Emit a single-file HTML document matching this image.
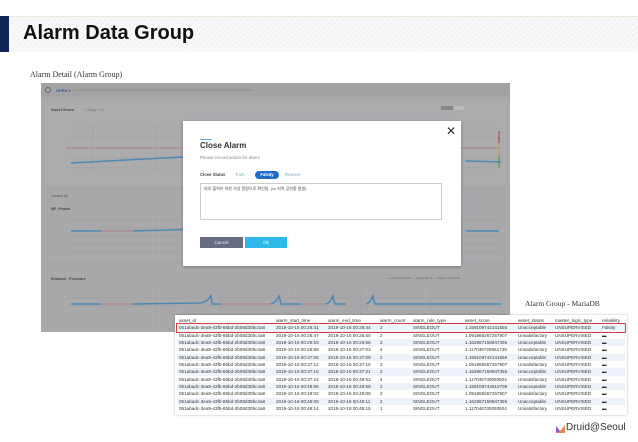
<!DOCTYPE html>
<html><head><meta charset="utf-8"><style>
*{margin:0;padding:0;box-sizing:border-box}
body{width:638px;height:442px;background:#fff;position:relative;overflow:hidden;font-family:"Liberation Sans","Noto Sans CJK KR",sans-serif}
.abs{position:absolute}
.title{left:0;top:16px;width:638px;height:36px;background:repeating-linear-gradient(135deg,#f4f4f4 0 2px,#fafafa 2px 4px);border-top:1px solid #f0e6dc}
.bar{left:0;top:16px;width:9px;height:36px;background:#10265a}
.t{left:23px;top:22px;font-size:20px;font-weight:bold;color:#111}
.cap{font-family:"Liberation Serif",serif;font-size:8px;color:#333}
.panel{left:41px;top:83px;width:469px;height:249px;background:#a9a9ac}
.modal{left:183px;top:121px;width:278px;height:145px;background:#fff;box-shadow:0 1px 3px rgba(0,0,0,.3)}
table{border-collapse:collapse;font-size:4.6px;color:#333;font-family:"Liberation Sans",sans-serif}
td{height:7.33px;padding:0 0 0 2px;white-space:nowrap;overflow:hidden}
tr:nth-child(even) td{background:#eef3fa}
</style></head><body>
<div class="abs title"></div><div class="abs bar"></div>
<div class="abs t">Alarm Data Group</div>
<div class="abs cap" style="left:30px;top:70px">Alarm Detail (Alarm Group)</div>

<div class="abs panel">
<svg width="469" height="249" style="position:absolute;left:0;top:0">
<rect x="0" y="0" width="469" height="14" fill="#a3a3a6"/>
<circle cx="7" cy="7" r="2.5" fill="none" stroke="#666" stroke-width="1"/>
<text x="15" y="9" font-size="4" fill="#3a5a9a" font-weight="bold">OPEN ▾</text>
<rect x="32" y="6" width="180" height="2" fill="#999"/>
<rect x="5" y="18" width="460" height="85" fill="#acacaf"/>
<text x="10" y="28" font-size="4" font-weight="bold" fill="#444">Asset Score</text>
<text x="43" y="28" font-size="3.5" fill="#777">✓ Single Out</text>
<rect x="400" y="23" width="12" height="4" fill="#888"/><rect x="413" y="23" width="10" height="4" fill="#bbb"/>
<g stroke="#999" stroke-width=".4">
<line x1="25" y1="45" x2="460" y2="45"/><line x1="25" y1="55" x2="460" y2="55"/><line x1="25" y1="65" x2="460" y2="65"/><line x1="25" y1="75" x2="460" y2="75"/><line x1="25" y1="85" x2="460" y2="85"/>
<line x1="52" y1="42" x2="52" y2="88"/><line x1="115" y1="42" x2="115" y2="88"/><line x1="180" y1="42" x2="180" y2="88"/>
</g>
<line x1="25" y1="65" x2="460" y2="65" stroke="#b06060" stroke-width=".5"/>
<path d="M30 80 L160 73 Q168 70 170 62 L171 78 L180 78" fill="none" stroke="#4a8ab6" stroke-width="1.5"/>
<path d="M425 78 L460 79" fill="none" stroke="#4a8ab6" stroke-width="1.5"/>
<line x1="458" y1="48" x2="458" y2="60" stroke="#c03030" stroke-width="1"/><line x1="458" y1="60" x2="458" y2="72" stroke="#c0a030" stroke-width="1"/><line x1="458" y1="72" x2="458" y2="85" stroke="#40a040" stroke-width="1"/>
<line x1="5" y1="106" x2="465" y2="106" stroke="#9a9a9d" stroke-width=".6"/>
<text x="10" y="114" font-size="3.5" fill="#555">Caused by</text>
<text x="10" y="127" font-size="4" font-weight="bold" fill="#444">BF_Power</text>
<g stroke="#999" stroke-width=".4">
<line x1="25" y1="137" x2="460" y2="137"/><line x1="25" y1="145" x2="460" y2="145"/><line x1="25" y1="153" x2="460" y2="153"/><line x1="25" y1="161" x2="460" y2="161"/><line x1="25" y1="169" x2="460" y2="169"/>
<line x1="52" y1="135" x2="52" y2="172"/><line x1="115" y1="135" x2="115" y2="172"/><line x1="180" y1="135" x2="180" y2="172"/><line x1="420" y1="135" x2="420" y2="172"/>
</g>
<path d="M30 148 L60 148 M92 148 L160 146 Q168 144 170 139 L171 148 L180 148 M425 148 L458 148" fill="none" stroke="#4a8ab6" stroke-width="1.5"/>
<path d="M60 148 L92 148" stroke="#b07080" stroke-width=".8"/>
<line x1="5" y1="180" x2="465" y2="180" stroke="#9a9a9d" stroke-width=".6"/>
<text x="10" y="197" font-size="4" font-weight="bold" fill="#444">Exhaust_Pressure</text>
<text x="345" y="196" font-size="3" fill="#666">— Lower Limit 800 — Target 937.2 — Upper Limit 1140</text>
<g stroke="#999" stroke-width=".4">
<line x1="25" y1="207" x2="460" y2="207"/><line x1="25" y1="215" x2="460" y2="215"/><line x1="25" y1="223" x2="460" y2="223"/><line x1="25" y1="231" x2="460" y2="231"/><line x1="25" y1="239" x2="460" y2="239"/>
<line x1="52" y1="205" x2="52" y2="245"/><line x1="115" y1="205" x2="115" y2="245"/><line x1="180" y1="205" x2="180" y2="245"/><line x1="250" y1="205" x2="250" y2="245"/><line x1="320" y1="205" x2="320" y2="245"/><line x1="390" y1="205" x2="390" y2="245"/>
</g>
<path d="M30 221 L60 221 M92 221 L160 220 Q168 218 170 212 L171 221 L180 221 M230 221 Q236 219 238 213 L240 221 L260 221 M285 221 Q290 219 292 213 L294 221 L305 221 M325 221 Q330 219 332 213 L334 221 L460 221" fill="none" stroke="#4a8ab6" stroke-width="1.5"/>
<path d="M60 221 L92 221 M180 221 L230 221 M260 221 L285 221" stroke="#b07080" stroke-width=".8"/>
</svg>
</div>

<div class="abs modal">
<div class="abs" style="left:17px;top:18px;width:12px;height:1px;background:#5ab0d8"></div>
<div class="abs" style="left:17px;top:20px;font-size:8px;font-weight:bold;color:#333">Close Alarm</div>
<div class="abs" style="left:17px;top:34px;font-size:4.5px;color:#888">Please record action for alarm</div>
<div class="abs" style="left:17px;top:51px;font-size:4.2px;color:#444;font-weight:bold">Close Status</div>
<div class="abs" style="left:52px;top:51px;font-size:4.2px;color:#7ab">Truth</div>
<div class="abs" style="left:72px;top:50px;width:24px;height:8px;border-radius:4px;background:#1f6cc8;color:#fff;font-size:4.2px;font-weight:bold;text-align:center;line-height:8px">Falsity</div>
<div class="abs" style="left:102px;top:51px;font-size:4.2px;color:#7ab">Reserve</div>
<div class="abs" style="left:17px;top:62px;width:242px;height:37px;border:1px solid #ccc;font-size:4px;color:#444;padding:2px 3px">외부 출력이 의한 가성 알람으로 확인됨. (xx 지역 공연중 발생)</div>
<div class="abs" style="left:17px;top:116px;width:43px;height:11px;background:#676c83;color:#eee;font-size:4.5px;text-align:center;line-height:11px">Cancel</div>
<div class="abs" style="left:62px;top:116px;width:42px;height:11px;background:#2fb9ea;color:#fff;font-size:4.5px;text-align:center;line-height:11px">Ok</div>
<div class="abs" style="left:263px;top:3px;font-size:12px;color:#333">✕</div>
</div>

<div class="abs cap" style="left:525px;top:299px;font-size:7.5px">Alarm Group - MariaDB</div>
<div class="abs" style="left:175px;top:315px;width:452px;height:100px;background:#fff;box-shadow:0 0 2px rgba(0,0,0,.3)"></div>
<table class="abs" style="left:177px;top:317px;width:448px;table-layout:fixed">
<colgroup><col style="width:97px"><col style="width:52px"><col style="width:52px"><col style="width:33px"><col style="width:52px"><col style="width:53px"><col style="width:37px"><col style="width:47px"><col style="width:25px"></colgroup>
<tr><td>asset_id</td><td>alarm_start_time</td><td>alarm_end_time</td><td>alarm_count</td><td>alarm_rule_type</td><td>asset_score</td><td>asset_status</td><td>master_logic_type</td><td>reliability</td></tr>
<tr style="outline:1px solid #d04040"><td>051abadc-3ea9-43fb-85bd-2b08d30bc4a8</td><td>2019-10-16 00:26:41</td><td>2019-10-16 00:26:44</td><td>2</td><td>SINGLEOUT</td><td>1.159109742141556</td><td>Unacceptable</td><td>UNSUPERVISED</td><td>Falsity</td></tr>
<tr><td>051abadc-3ea9-43fb-85bd-2b08d30bc4a8</td><td>2019-10-16 00:26:47</td><td>2019-10-16 00:26:50</td><td>2</td><td>SINGLEOUT</td><td>1.091968267257907</td><td>Unsatisfactory</td><td>UNSUPERVISED</td><td>▬</td></tr>
<tr><td>051abadc-3ea9-43fb-85bd-2b08d30bc4a8</td><td>2019-10-16 00:26:53</td><td>2019-10-16 00:26:56</td><td>2</td><td>SINGLEOUT</td><td>1.162967158847355</td><td>Unacceptable</td><td>UNSUPERVISED</td><td>▬</td></tr>
<tr><td>051abadc-3ea9-43fb-85bd-2b08d30bc4a8</td><td>2019-10-16 00:26:59</td><td>2019-10-16 00:37:03</td><td>4</td><td>SINGLEOUT</td><td>1.117046729561739</td><td>Unsatisfactory</td><td>UNSUPERVISED</td><td>▬</td></tr>
<tr><td>051abadc-3ea9-43fb-85bd-2b08d30bc4a8</td><td>2019-10-16 00:37:06</td><td>2019-10-16 00:37:09</td><td>2</td><td>SINGLEOUT</td><td>1.159109742141556</td><td>Unacceptable</td><td>UNSUPERVISED</td><td>▬</td></tr>
<tr><td>051abadc-3ea9-43fb-85bd-2b08d30bc4a8</td><td>2019-10-16 00:37:12</td><td>2019-10-16 00:37:15</td><td>2</td><td>SINGLEOUT</td><td>1.091968267257907</td><td>Unsatisfactory</td><td>UNSUPERVISED</td><td>▬</td></tr>
<tr><td>051abadc-3ea9-43fb-85bd-2b08d30bc4a8</td><td>2019-10-16 00:37:18</td><td>2019-10-16 00:37:21</td><td>2</td><td>SINGLEOUT</td><td>1.162967158847355</td><td>Unacceptable</td><td>UNSUPERVISED</td><td>▬</td></tr>
<tr><td>051abadc-3ea9-43fb-85bd-2b08d30bc4a8</td><td>2019-10-16 00:37:24</td><td>2019-10-16 00:48:53</td><td>4</td><td>SINGLEOUT</td><td>1.117046730093924</td><td>Unsatisfactory</td><td>UNSUPERVISED</td><td>▬</td></tr>
<tr><td>051abadc-3ea9-43fb-85bd-2b08d30bc4a8</td><td>2019-10-16 00:48:56</td><td>2019-10-16 00:48:59</td><td>2</td><td>SINGLEOUT</td><td>1.159109743910708</td><td>Unacceptable</td><td>UNSUPERVISED</td><td>▬</td></tr>
<tr><td>051abadc-3ea9-43fb-85bd-2b08d30bc4a8</td><td>2019-10-16 00:49:02</td><td>2019-10-16 00:49:05</td><td>2</td><td>SINGLEOUT</td><td>1.091968267257907</td><td>Unsatisfactory</td><td>UNSUPERVISED</td><td>▬</td></tr>
<tr><td>051abadc-3ea9-43fb-85bd-2b08d30bc4a8</td><td>2019-10-16 00:49:08</td><td>2019-10-16 00:49:11</td><td>2</td><td>SINGLEOUT</td><td>1.162967158847355</td><td>Unacceptable</td><td>UNSUPERVISED</td><td>▬</td></tr>
<tr><td>051abadc-3ea9-43fb-85bd-2b08d30bc4a8</td><td>2019-10-16 00:49:14</td><td>2019-10-16 00:49:15</td><td>1</td><td>SINGLEOUT</td><td>1.117046730093924</td><td>Unsatisfactory</td><td>UNSUPERVISED</td><td>▬</td></tr>
</table>

<svg class="abs" style="left:556px;top:424px" width="10" height="10"><path d="M0 2 L4 7 L9 1 L9 9 L0 9Z" fill="#e8884a"/><path d="M0 2 L4 7 L0 9Z" fill="#8a5cc0"/></svg>
<div class="abs" style="left:566px;top:422px;font-size:10px;color:#333">Druid@Seoul</div>
</body></html>
